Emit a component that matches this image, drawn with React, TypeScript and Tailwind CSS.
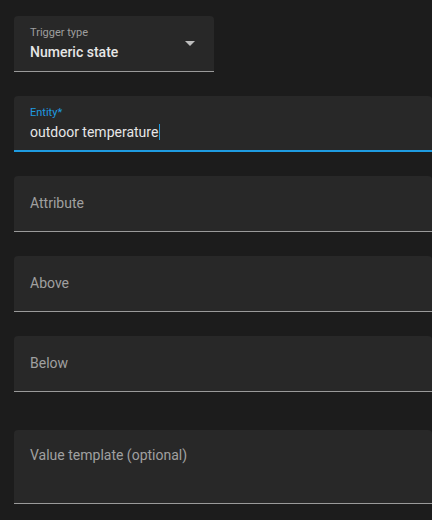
import React from "react";

const FIELDS = ["Attribute", "Above", "Below"];

function EmptyField({ label, tall = false }: { label: string; tall?: boolean }) {
  return (
    <div
      className={`w-full rounded-t-[4px] bg-[#282828] border-b border-[#9a9a9a] px-4 ${
        tall ? "h-[74px] pt-[13px]" : "h-[56px] flex items-center pb-[2px]"
      }`}
    >
      <span className="text-[14px] leading-[20px] text-[#a0a0a0]">{label}</span>
    </div>
  );
}

export default function App() {
  return (
    <main
      className="min-h-[520px] w-[432px] overflow-hidden bg-[#1c1c1c] pl-[14px] pt-4"
      style={{ fontFamily: "Roboto, 'Noto Sans', sans-serif" }}
    >
      {/* trigger type select */}
      <div className="relative h-[56px] w-[200px] rounded-t-[4px] bg-[#282828] border-b border-[#9a9a9a] px-4 pt-[10px]">
        <div className="text-[11px] leading-[14px] text-[#9e9e9e]">Trigger type</div>
        <div className="mt-[3px] text-[14px] leading-[18px] font-medium text-[#e6e6e6]">Numeric state</div>
        <svg className="absolute right-[19px] top-[25px]" width="10" height="5" viewBox="0 0 10 5">
          <path d="M0 0 L10 0 L5 5 Z" fill="#bdbdbd" />
        </svg>
      </div>

      <div className="mt-6 flex flex-col gap-6">
        {/* entity, focused */}
        <div className="h-[56px] w-full rounded-t-[4px] bg-[#282828] border-b-2 border-[#1e9be0] px-4 pt-[10px]">
          <div className="text-[11px] leading-[14px] text-[#1e9be0]">Entity*</div>
          <div className="mt-[3px] flex items-center text-[14px] leading-[18px] text-[#e6e6e6]">
            outdoor temperature
            <span className="ml-px inline-block h-[16px] w-px bg-[#1e9be0]" />
          </div>
        </div>

        {FIELDS.map((f) => (
          <EmptyField key={f} label={f} />
        ))}
      </div>

      <div className="mt-[38px]">
        <EmptyField label="Value template (optional)" tall />
      </div>
    </main>
  );
}
